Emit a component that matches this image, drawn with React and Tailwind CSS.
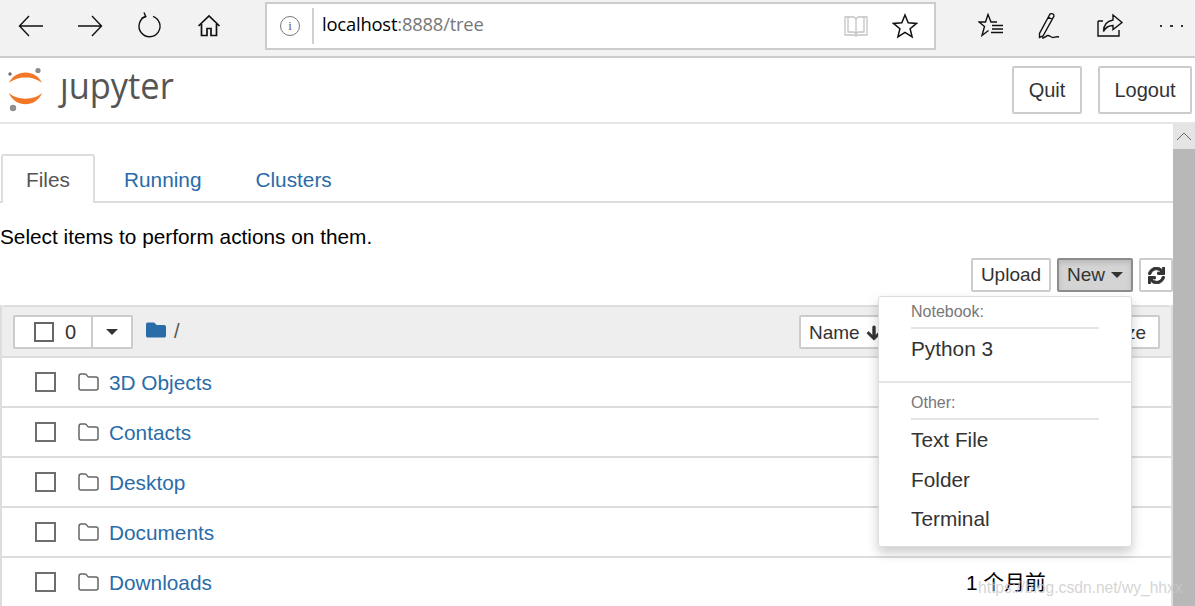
import React from "react";
import { FaFolder, FaSync, FaArrowDown } from "react-icons/fa";

const Caret = ({ className }) => (
  <svg className={className} width="12" height="6" viewBox="0 0 12 6"><path d="M0 0h12L6 6z" fill="currentColor" /></svg>
);

const Ico = ({ children, w = 32, h = 32 }) => (
  <svg width={w} height={h} viewBox="0 0 32 32" fill="none" stroke="#111" strokeWidth="1.4">{children}</svg>
);

const NavSlot = ({ children }) => <div className="flex h-[52px] w-[59.5px] shrink-0 items-center justify-center">{children}</div>;

function BrowserBar() {
  return (
    <div className="flex h-[58px] items-start border-b-2 border-[#cccccc] bg-[#f2f2f2] pl-[1px]">
      <NavSlot><Ico><path d="M28 16H4.500M14 6 4.500 16 14 26" /></Ico></NavSlot>
      <NavSlot><Ico><path d="M4 16h23.500M18 6l9.500 10L18 26" /></Ico></NavSlot>
      <NavSlot><Ico><path d="M11.500 6.500A10.500 10.500 0 1 0 19 6.300" /><path d="M10 2.500l1.800 4.200-4.200 1.500" /></Ico></NavSlot>
      <NavSlot><Ico><path d="M5.500 16 16 6l10.500 10M8.500 14v11.500h5.500v-7h4v7h5.500V14" strokeWidth="1.700" /></Ico></NavSlot>
      <div className="ml-[26px] mt-[2px] flex h-[48px] w-[671px] shrink-0 items-center border-2 border-[#cccccc] bg-white">
        <div className="ml-[13px] flex h-[20px] w-[20px] items-center justify-center rounded-full border border-[#777777] font-['Liberation_Serif',serif] text-[13px] text-[#666666]">i</div>
        <div className="ml-[12px] h-[36px] w-[2px] bg-[#d0d0d0]" />
        <div className="ml-[8px] -mt-[4px] font-['Open_Sans',sans-serif] text-[18.4px] tracking-[-0.2px] text-black">localhost<span className="text-[#777777]">:8888/tree</span></div>
        <div className="flex-1" />
        <svg width="24" height="22" viewBox="0 0 24 22" fill="none" stroke="#c4c4c4" strokeWidth="1.300" className="mr-[24px]"><path d="M1 2h9l2 2 2-2h9v18h-9l-2 1-2-1H1zM12 4v17M4 2v15h6l2 2 2-2h6V2" /></svg>
        <svg width="26" height="26" viewBox="0 0 26 26" fill="none" stroke="#111" strokeWidth="1.500" className="mr-[16px]"><path d="M13 2l3.200 7.800 8.300.6-6.400 5.300 2 8.100L13 19.400l-7.100 4.400 2-8.100L1.500 10.400l8.300-.6z" /></svg>
      </div>
      <div className="ml-[25px] flex">
        <NavSlot><svg width="26" height="26" viewBox="0 0 26 26" fill="none" stroke="#111" strokeWidth="1.400"><path d="M19 9h-6L10 1.500 7.500 9H1l5.500 4.500L4 22.500l6.500-5M14 12.500h11M14 16h11M13 19.500h12" /></svg></NavSlot>
        <NavSlot><svg width="26" height="28" viewBox="0 0 26 28" fill="none" stroke="#111" strokeWidth="1.400"><path d="M13 2c2-1 4 0 4 2L6 24l-3.500 1.500v-4zM11 5l4.500 2.500M5 26c3 0 4-2.500 6-2.500s3 2 5 2 3-1.500 6-.5" /></svg></NavSlot>
        <NavSlot><svg width="28" height="26" viewBox="0 0 28 26" fill="none" stroke="#111" strokeWidth="1.400"><path d="M2 8v15h21v-6M7 8H2M17 2l9 7.500-9 7v-4c-4 0-7 1-9.500 6 0-7 4-10.500 9.500-11.500z" /></svg></NavSlot>
        <div className="flex h-[52px] w-[55px] shrink-0 items-center gap-[8px] pl-[20px]"><i className="block h-[2.500px] w-[2.500px] bg-[#333]" /><i className="block h-[2.500px] w-[2.500px] bg-[#333]" /><i className="block h-[2.500px] w-[2.500px] bg-[#333]" /></div>
      </div>
    </div>
  );
}

function Logo() {
  return (
    <div className="flex items-center">
      <svg width="36" height="46" viewBox="0 0 36 46" className="shrink-0">
        <path d="M1 16C7 2 28 2 34 16 26 8.500 9 8.500 1 16z" fill="#f37726" />
        <path d="M1 26C7 41 28 41 34 26 26 33.500 9 33.500 1 26z" fill="#f37726" />
        <circle cx="30" cy="3.500" r="2.600" fill="#8a8a8a" />
        <circle cx="2" cy="7" r="1.700" fill="#6f6f6f" />
        <circle cx="5" cy="41" r="3.200" fill="#8f8f8f" />
      </svg>
      <span className="ml-[16px] -mt-[12px] origin-left scale-x-[0.93] font-['Open_Sans',sans-serif] text-[37px] leading-none text-[#555555]">ȷupyter</span>
    </div>
  );
}

const names = ["3D Objects", "Contacts", "Desktop", "Documents", "Downloads"];

function Row({ name, last }) {
  return (
    <div className="flex h-[50px] items-center border-t-2 border-[#dddddd] pl-[33px]">
      <div className="h-[20px] w-[21px] border-2 border-[#6e6e6e]" />
      <svg width="21" height="18" viewBox="0 0 21 18" fill="none" stroke="#666666" strokeWidth="1.500" className="ml-[22px] -mt-[1px]"><path d="M1 3.500C1 2 2 1 3 1h4c1 0 1.500.5 2 1.500S10 4 11 4h7c1.200 0 2 .8 2 2v9c0 1.200-.8 2-2 2H3c-1.200 0-2-.8-2-2z" /></svg>
      <a className="ml-[10px] mt-[2px] text-[20.8px] text-[#2a6ca8]">{name}</a>
      {last && <span className="absolute left-[966px] mt-[2px] text-[20.8px] text-black">1 个月前</span>}
    </div>
  );
}

const MenuItem = ({ children }) => <div className="h-[39.5px] pl-[33px] text-[20.8px] leading-[38px] text-[#333333]">{children}</div>;

function Dropdown() {
  return (
    <div className="absolute left-[878px] top-[296px] z-10 h-[251px] w-[254px] rounded-[3px] border border-[#dddddd] bg-white shadow-[0_6px_12px_rgba(0,0,0,0.2)]">
      <div className="pl-[32px] pt-[5px] text-[16px] leading-[20px] text-[#777777]">Notebook:</div>
      <div className="ml-[32px] mr-[32px] mt-[5px] h-[2px] bg-[#e5e5e5]" />
      <div className="h-[40px] pl-[32px] text-[20.8px] leading-[39px] text-[#333333]">Python 3</div>
      <div className="mt-[12px] h-[2px] bg-[#e5e5e5]" />
      <div className="pl-[32px] pt-[10px] text-[16px] leading-[20px] text-[#777777]">Other:</div>
      <div className="ml-[32px] mr-[32px] mt-[5px] h-[2px] bg-[#e5e5e5]" />
      <div className="-ml-[1px] mt-[1px]">
        <MenuItem>Text File</MenuItem>
        <MenuItem>Folder</MenuItem>
        <MenuItem>Terminal</MenuItem>
      </div>
    </div>
  );
}

export default function App() {
  return (
    <div className="relative h-[606px] w-[1195px] overflow-hidden bg-white font-['Liberation_Sans','Noto_Sans_CJK_SC',sans-serif]">
      <BrowserBar />
      <div className="flex h-[66px] items-center justify-between border-b-2 border-[#e7e7e7] pl-[8px] pr-[3px]">
        <Logo />
        <div className="flex gap-[16px] text-[20px] text-[#333333]">
          <div className="flex h-[48px] w-[70px] items-center justify-center rounded-[2px] border-2 border-[#cccccc]">Quit</div>
          <div className="flex h-[48px] w-[94px] items-center justify-center rounded-[2px] border-2 border-[#cccccc]">Logout</div>
        </div>
      </div>
      <div className="flex h-[482px]">
        <div className="w-[1173px] pt-[30px]">
          <div className="flex h-[49px] items-end border-b-2 border-[#dddddd] pl-[1px] text-[20.8px]">
            <div className="-mb-[2px] flex h-[49px] w-[94px] items-center justify-center rounded-t-[3px] border-2 border-b-0 border-[#dddddd] bg-white text-[#555555]">Files</div>
            <div className="flex h-[47px] items-center pl-[29px] pt-[4px] text-[#2a6ca8]">Running</div>
            <div className="flex h-[47px] items-center pl-[54px] pt-[4px] text-[#2a6ca8]">Clusters</div>
          </div>
          <div className="mt-[19px] h-[30px] text-[20.8px] leading-[30px] text-black">Select items to perform actions on them.</div>
          <div className="mt-[6px] flex h-[34px] justify-end text-[19px]">
            <div className="flex h-[34px] w-[80px] items-center justify-center rounded-[2px] border-2 border-[#cccccc] text-[#333333]">Upload</div>
            <div className="ml-[6px] flex h-[34px] w-[76px] items-center justify-center gap-[6px] rounded-[2px] border-2 border-[#8c8c8c] bg-[#d4d4d4] text-[#333333] shadow-[inset_0_3px_5px_rgba(0,0,0,0.125)]">New<Caret /></div>
            <div className="ml-[6px] flex h-[34px] w-[34px] items-center justify-center rounded-[2px] border-2 border-[#cccccc] text-[#333333]"><FaSync className="stroke-current stroke-[30] text-[17px]" /></div>
          </div>
          <div className="mt-[13px] border-x-2 border-[#dddddd]">
            <div className="relative flex h-[51px] items-center rounded-t-[3px] border-t-2 border-[#dddddd] bg-[#eeeeee] pl-[11px]">
              <div className="flex h-[34px] w-[120px] rounded-[2px] border-2 border-[#cccccc] bg-white">
                <div className="flex w-[78px] items-center border-r-2 border-[#cccccc] pl-[19px] text-[20px] text-[#333333]">
                  <div className="h-[20px] w-[20px] border-2 border-[#666666]" />
                  <span className="ml-[11px]">0</span>
                </div>
                <div className="flex flex-1 items-center justify-center text-[#333333]"><Caret /></div>
              </div>
              <FaFolder className="ml-[13px] -mt-[4px] text-[20px] text-[#2a6ca8]" />
              <span className="ml-[8px] -mt-[2px] text-[20px] text-[#555555]">/</span>
              <div className="absolute left-[797px] top-[8px] flex h-[34px] w-[110px] items-center rounded-[2px] border-2 border-[#cccccc] bg-white pl-[8px] pt-[2px] text-[19px] text-[#333333]">Name<FaArrowDown className="ml-[6px] stroke-current stroke-[25] text-[16px]" /></div>
              <div className="absolute right-[11px] top-[8px] flex h-[34px] w-[60px] items-center justify-end rounded-[2px] border-2 border-[#cccccc] bg-white pr-[12px] pt-[2px] text-[19px] text-[#333333]">Size</div>
            </div>
            {names.map((n, i) => <Row key={n} name={n} last={i === 4} />)}
          </div>
        </div>
        <div className="w-[22px] bg-[#b8b8b8]">
          <div className="flex h-[25px] items-center justify-center bg-[#e4e4e4]">
            <svg width="16" height="9" viewBox="0 0 16 9" fill="none" stroke="#666" strokeWidth="1"><path d="M1 8l7-7 7 7" /></svg>
          </div>
        </div>
      </div>
      <Dropdown />
      <div className="absolute left-[978px] top-[578px] z-20 text-[15.6px] leading-[20px] text-[#c9c9c9]/80">https://blog.csdn.net/wy_hhxx</div>
    </div>
  );
}
